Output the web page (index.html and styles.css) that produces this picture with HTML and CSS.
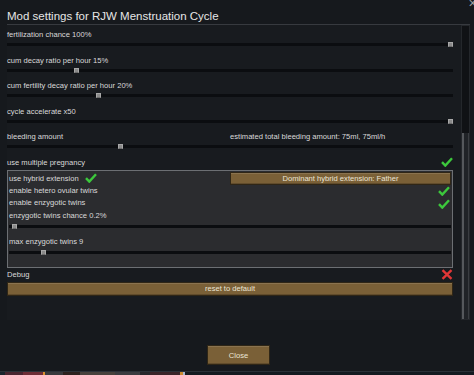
FILE: index.html
```html
<!DOCTYPE html>
<html lang="en">
<head>
  <meta charset="UTF-8">
  <title>Mod settings for RJW Menstruation Cycle</title>
  <meta name="viewport" content="width=device-width, initial-scale=1.0">
  <link rel="stylesheet" href="styles.css">
</head>
<body>

  <div class="window">
    <span class="close-x">✕</span>
    <div class="title">Mod settings for RJW Menstruation Cycle</div>

    <div class="scroll">
      <div class="content">
        <div class="label">fertilization chance 100%</div>
        <div class="slider"><span class="handle" style="--v:1"></span></div>

        <div class="label">cum decay ratio per hour 15%</div>
        <div class="slider"><span class="handle" style="--v:0.152"></span></div>

        <div class="label">cum fertility decay ratio per hour 20%</div>
        <div class="slider"><span class="handle" style="--v:0.202"></span></div>

        <div class="label">cycle accelerate x50</div>
        <div class="slider"><span class="handle" style="--v:1"></span></div>

        <div class="label split">
          <span>bleeding amount</span>
          <span>estimated total bleeding amount: 75ml, 75ml/h</span>
        </div>
        <div class="slider"><span class="handle" style="--v:0.252"></span></div>

        <div class="label row">
          <span>use multiple pregnancy</span>
          <svg class="check" viewBox="0 0 12 10"><path d="M1 5.2 L4.3 8.6 L11 1.3"/></svg>
        </div>

        <div class="box">
          <div class="brow first split">
            <div class="inline">
              <span>use hybrid extension</span>
              <svg class="check" viewBox="0 0 12 10"><path d="M1 5.2 L4.3 8.6 L11 1.3"/></svg>
            </div>
            <button class="btn dom">Dominant hybrid extension: Father</button>
          </div>
          <div class="brow row">
            <span>enable hetero ovular twins</span>
            <svg class="check" viewBox="0 0 12 10"><path d="M1 5.2 L4.3 8.6 L11 1.3"/></svg>
          </div>
          <div class="brow row">
            <span>enable enzygotic twins</span>
            <svg class="check" viewBox="0 0 12 10"><path d="M1 5.2 L4.3 8.6 L11 1.3"/></svg>
          </div>
          <div class="brow">enzygotic twins chance 0.2%</div>
          <div class="slider in-box"><span class="handle" style="--v:0.007"></span></div>
          <div class="brow">max enzygotic twins 9</div>
          <div class="slider in-box"><span class="handle" style="--v:0.073"></span></div>
        </div>

        <div class="debug row">
          <span>Debug</span>
          <svg class="cross" viewBox="0 0 12 11"><path d="M1.5 1.2 L10.5 9.8 M10.5 1.2 L1.5 9.8"/></svg>
        </div>
        <button class="btn reset">reset to default</button>
      </div>

      <div class="scrollbar"><div class="thumb"></div></div>
    </div>

    <div class="footer">
      <button class="btn close">Close</button>
    </div>

    <div class="taskbar">
      <span class="seg" style="width:5px;background:#1a252d"></span>
      <span class="seg" style="width:18px;background:#4a2530"></span>
      <span class="seg" style="width:20px;background:#6e2d36"></span>
      <span class="seg" style="width:2px;background:#d8902e"></span>
      <span class="seg" style="width:18px;background:#38393c"></span>
      <span class="seg" style="width:17px;background:#2c211e"></span>
      <span class="seg" style="width:35px;background:#47413c"></span>
      <span class="seg" style="width:25px;background:#3b3c40"></span>
      <span class="seg" style="width:10px;background:#27272b"></span>
      <span class="seg" style="width:30px;background:#3a2428"></span>
      <span class="seg" style="width:3px;background:#c98a30"></span>
      <span class="seg" style="width:2px;background:#a9b6cc"></span>
    </div>
  </div>

</body>
</html>
```

FILE: styles.css
```css
body { margin:0; padding:0; background:#16191d; font-family:"Liberation Sans", Arial, sans-serif; color:#dadada; overflow:hidden; }
.window { position:relative; width:474px; height:375px; }
.close-x { position:absolute; right:-3px; top:-3px; font-size:11px; color:#9a9c9f; }
.title { height:24px; box-sizing:border-box; padding:8px 0 0 7px; line-height:16px; font-size:11.5px; color:#e6e6e6; }

.scroll { display:flex; gap:8px; margin-left:7px; width:463px; height:295px; border-top:1px solid #373a3f; background:#181b1f; }
.content { width:446px; padding-top:2px; }
.label { height:15px; line-height:15px; font-size:7.6px; white-space:nowrap; }
.split { display:grid; grid-template-columns:1fr 1fr; }
.row { display:flex; justify-content:space-between; align-items:center; }

.slider { position:relative; height:10.6px; }
.slider::before { content:""; position:absolute; left:0; right:0; top:1px; height:3px; background:#0b0d10; }
.handle { position:absolute; top:0; left:calc((100% - 5px) * var(--v)); width:5px; height:5px; box-sizing:border-box; background:#8a8a8a; border:1px solid #a8a8a8; border-bottom-color:#6a6a6a; }

.check { width:12px; height:10px; }
.check path { fill:none; stroke:#3cc83c; stroke-width:2.4; }
.cross { width:12px; height:11px; }
.cross path { fill:none; stroke:#e23636; stroke-width:2.4; }

.box { border:1px solid #6c6f73; background:#2b2c2f; padding:1px 1px 5px 1px; }
.brow { height:12.5px; line-height:12.5px; font-size:7.6px; white-space:nowrap; }
.brow.first { height:13px; line-height:13px; }
.brow.row .check { margin-right:1px; }
.inline { display:flex; align-items:center; gap:6px; }
.slider.in-box { height:13.5px; }
.slider.in-box::before { top:2.5px; }
.slider.in-box .handle { top:2px; }

.btn { display:flex; justify-content:center; align-items:center; padding:0; margin:0; font-family:"Liberation Sans", Arial, sans-serif; font-size:7.6px; color:#ebe5d6; background:#7a6037; border:1px solid #2f2616; box-shadow:inset 0 1px 0 rgba(255,255,255,0.12), inset 0 -1px 0 rgba(0,0,0,0.2); box-sizing:border-box; }
.dom { width:100%; height:13px; }
.debug { height:13px; font-size:7.6px; }
.reset { width:100%; height:14px; margin-top:1px; }

.scrollbar { width:9px; display:flex; flex-direction:column; box-sizing:border-box; border:1px solid #24272b; background:#101215; }
.thumb { margin-top:107px; flex:1; border-left:2px solid #55585c; border-right:1px solid #3a3d41; background:#202327; }

.footer { display:flex; justify-content:center; padding:25px 0 0 3px; }
.close { width:63px; height:20px; }

.taskbar { display:flex; margin-top:6px; height:5px; border-top:1px solid #2b3138; background:#141a20; }
.seg { display:block; height:100%; }
```
